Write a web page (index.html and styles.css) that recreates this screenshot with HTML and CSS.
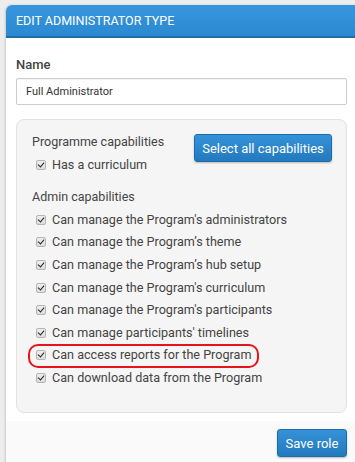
FILE: index.html
```html
<!DOCTYPE html>
<html lang="en">
<head>
  <meta charset="UTF-8" />
  <title>Edit administrator type</title>
  <link rel="stylesheet" href="styles.css">
</head>
<body>
  <div class="modal">
    <header class="modal-header">Edit administrator type</header>

    <div class="modal-body">
      <label class="field-label" for="roleName">Name</label>
      <input id="roleName" class="text-input" type="text" value="Full Administrator" />

      <div class="well">
        <div class="well-top">
          <div>
            <div class="group-title">Programme capabilities</div>
            <label class="check"><input type="checkbox" checked /> Has a curriculum</label>
          </div>
          <button class="btn btn-select">Select all capabilities</button>
        </div>

        <div class="group-title admin-title">Admin capabilities</div>
        <label class="check"><input type="checkbox" checked /> Can manage the Program's administrators</label>
        <label class="check"><input type="checkbox" checked /> Can manage the Program’s theme</label>
        <label class="check"><input type="checkbox" checked /> Can manage the Program’s hub setup</label>
        <label class="check"><input type="checkbox" checked /> Can manage the Program's curriculum</label>
        <label class="check"><input type="checkbox" checked /> Can manage the Program's participants</label>
        <label class="check"><input type="checkbox" checked /> Can manage participants' timelines</label>
        <label class="check marked"><input type="checkbox" checked /> Can access reports for the Program</label>
        <label class="check"><input type="checkbox" checked /> Can download data from the Program</label>
      </div>
    </div>

    <footer class="modal-footer">
      <button class="btn btn-save">Save role</button>
    </footer>
  </div>
</body>
</html>
```

FILE: styles.css
```css
:root {
  --page: #ededed;
  --text: #444;
  --well: #f5f5f5;
  --well-border: #e2e2e2;
}

* {
  box-sizing: border-box;
  margin: 0;
  padding: 0;
  font-family: Roboto, "Liberation Sans", sans-serif;
}

body {
  background: var(--page);
  color: var(--text);
  padding: 5px 0 0 6px;
  overflow: hidden;
  width: 355px;
  height: 462px;
}

.modal {
  width: 370px;
  background: #fff;
  border-radius: 6px 0 0 0;
  box-shadow: -1px 0 2px rgba(0, 0, 0, 0.15);
  overflow: hidden;
}

.modal-header {
  height: 33px;
  padding: 0 10px;
  display: flex;
  align-items: center;
  background: linear-gradient(#3796dd, #2b89d2);
  border-bottom: 2px solid #1e6eac;
  color: #fff;
  font-size: 12.5px;
  text-transform: uppercase;
}

.modal-body {
  padding: 19px 23px 8px 10px;
}

.field-label {
  display: block;
  font-size: 13px;
  font-weight: 500;
  color: #444;
  margin-bottom: 6px;
}

.text-input {
  display: block;
  width: 331px;
  height: 27px;
  border: 1px solid #ccc;
  border-radius: 2px;
  padding: 0 9px;
  font-size: 11px;
  color: #333;
  background: #fff;
  box-shadow: inset 0 1px 1px rgba(0, 0, 0, 0.05);
}

.well {
  width: 331px;
  margin-top: 14px;
  background: var(--well);
  border: 1px solid var(--well-border);
  border-radius: 8px;
  padding: 14px 14px 23px 15px;
}

.well-top {
  display: flex;
  justify-content: space-between;
  align-items: flex-start;
}

.group-title {
  font-size: 12.5px;
  color: #444;
  line-height: 16px;
  margin-bottom: 4px;
}

.admin-title {
  margin-top: 12px;
  margin-bottom: 4px;
}

.check {
  display: flex;
  align-items: center;
  font-size: 12.6px;
  line-height: 16px;
  height: 22.6px;
  padding-left: 4px;
  color: #444;
  width: max-content;
}

/* small grey checkbox like the old webkit one */
.check input {
  appearance: none;
  -webkit-appearance: none;
  position: relative;
  flex: none;
  width: 10px;
  height: 10px;
  margin: 0 6px 0 0;
  background: linear-gradient(#eee, #dcdcdc);
  border: 1px solid #b5b5b5;
  border-radius: 2px;
}
.check input:checked::after {
  content: "";
  position: absolute;
  left: 2px;
  top: 0;
  width: 3px;
  height: 5px;
  border: solid #222;
  border-width: 0 1.5px 1.5px 0;
  transform: rotate(40deg);
}

.marked {
  position: relative;
}
.marked::after {
  content: "";
  position: absolute;
  left: -4px;
  right: -8px;
  top: 0;
  bottom: -1px;
  border: 2px solid #e8141c;
  border-radius: 10px;
}

.btn {
  border: 1px solid #1d6dab;
  border-radius: 3px;
  background: linear-gradient(#3592d8, #2479bd);
  color: #fff;
  font-size: 13px;
  cursor: pointer;
  box-shadow: 0 1px 2px rgba(0, 0, 0, 0.25);
}

.btn-select {
  width: 138px;
  height: 28px;
}

.modal-footer {
  background: #fafafa;
  padding: 8px 0 0 271px;
  height: 50px;
}

.btn-save {
  width: 70px;
  height: 28px;
}
```
